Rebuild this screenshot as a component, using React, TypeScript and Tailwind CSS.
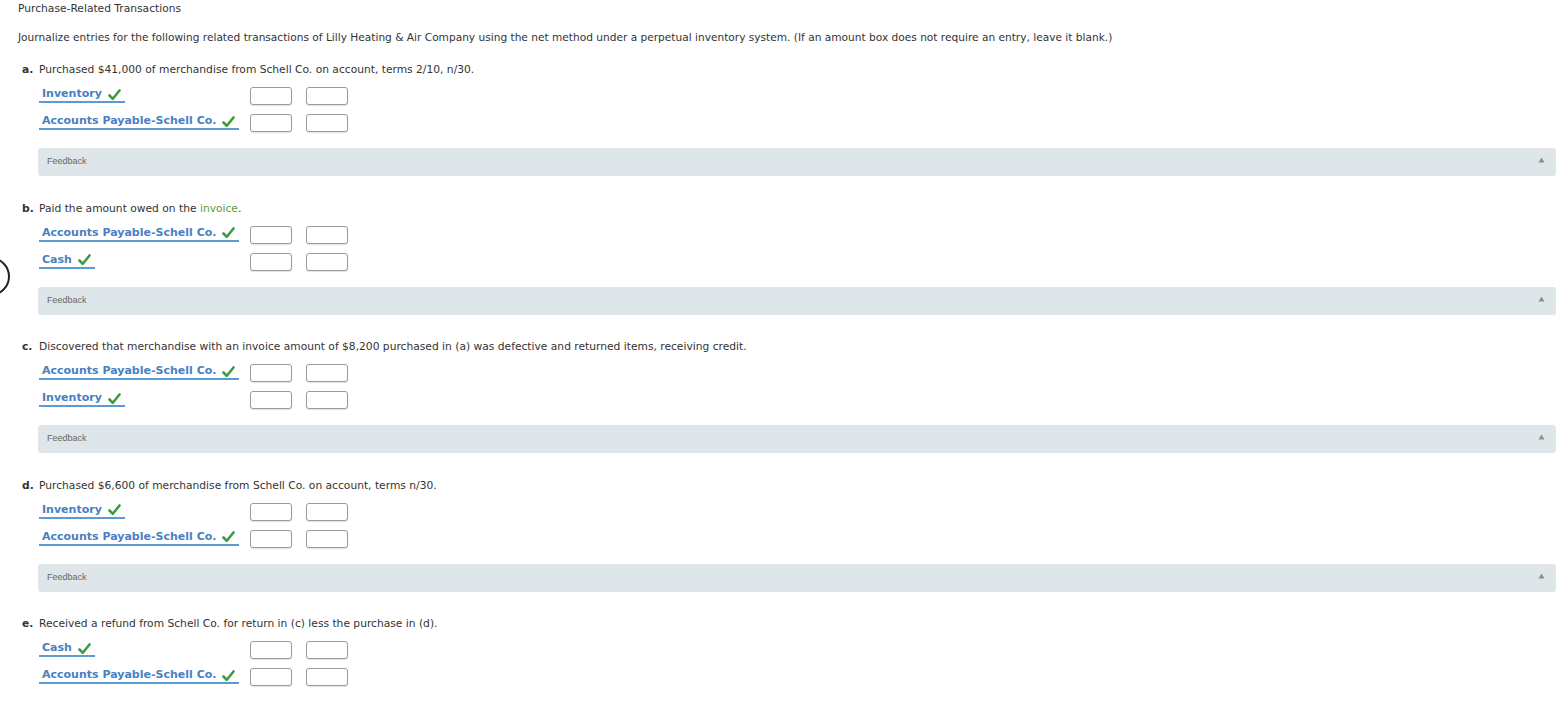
import React from "react";

const font = { fontFamily: '"DejaVu Sans", Verdana, sans-serif' };

function Check() {
  return (
    <svg width="13" height="12" viewBox="0 0 13 12" className="block ml-[6px] mt-[1px]">
      <path d="M1.5 6.5 L4.8 9.8 L11.5 1.5" fill="none" stroke="#3e9b3e" strokeWidth="2.6" strokeLinecap="round" strokeLinejoin="round" />
    </svg>
  );
}

function Row({ label }: { label: string }) {
  return (
    <div className="flex items-start h-[27px]">
      <div className="w-[211px] shrink-0 flex">
        <span className="flex items-center border-b-2 border-[#5b9bd5] pl-[3px] pr-[4px] pt-[1px] text-[11px] leading-[14px] font-bold text-[#4a7fc2]">
          {label}
          <Check />
        </span>
      </div>
      <div className="mt-[1px] w-[42px] h-[18px] rounded-[3px] border border-[#9a9a9a] bg-white shadow-[0_1px_1px_rgba(0,0,0,0.12)]" />
      <div className="ml-[14px] mt-[1px] w-[42px] h-[18px] rounded-[3px] border border-[#9a9a9a] bg-white shadow-[0_1px_1px_rgba(0,0,0,0.12)]" />
    </div>
  );
}

function Feedback() {
  return (
    <div className="mt-[8px] ml-[38px] mr-[2px] h-[28px] rounded-[3px] bg-[#dfe6e9] flex items-center justify-between pl-[9px] pr-[11px]">
      <span className="text-[9px] text-[#666]" style={{ fontFamily: '"Liberation Sans", Arial, sans-serif' }}>Feedback</span>
      <svg width="7" height="6" viewBox="0 0 7 6" className="-mt-[4px]">
        <path d="M3.5 0.5 L6.5 5.5 L0.5 5.5 Z" fill="#8a8f92" />
      </svg>
    </div>
  );
}

function Section({
  letter,
  text,
  rows,
  feedback = true,
}: {
  letter: string;
  text: React.ReactNode;
  rows: string[];
  feedback?: boolean;
}) {
  return (
    <div className="mb-[25.5px]">
      <div className="flex text-[10.7px] leading-[14px] text-[#333] pl-[22px]">
        <span className="w-[17px] font-bold">{letter}</span>
        <span>{text}</span>
      </div>
      <div className="pl-[39px] mt-[9px]">
        {rows.map((r, i) => (
          <Row key={i} label={r} />
        ))}
      </div>
      {feedback && <Feedback />}
    </div>
  );
}

export default function App() {
  const ap = "Accounts Payable-Schell Co.";
  return (
    <div className="relative w-[1558px] h-[701px] bg-white overflow-hidden" style={font}>
      <div className="absolute left-[-29px] top-[257px] w-[39px] h-[39px] rounded-full border-2 border-[#222]" />
      <div className="pl-[18px] pt-[2px] text-[10.7px] leading-[14px] text-[#333]">Purchase-Related Transactions</div>
      <div className="pl-[18px] mt-[14px] text-[10.6px] leading-[14px] text-[#333]">
        Journalize entries for the following related transactions of Lilly Heating &amp; Air Company using the net method under a perpetual inventory system. (If an amount box does not require an entry, leave it blank.)
      </div>
      <div className="mt-[19px]">
        <Section
          letter="a."
          text="Purchased $41,000 of merchandise from Schell Co. on account, terms 2/10, n/30."
          rows={["Inventory", ap]}
        />
        <Section
          letter="b."
          text={
            <>
              Paid the amount owed on the <span className="text-[#5f9a3a]">invoice</span>.
            </>
          }
          rows={[ap, "Cash"]}
        />
        <Section
          letter="c."
          text="Discovered that merchandise with an invoice amount of $8,200 purchased in (a) was defective and returned items, receiving credit."
          rows={[ap, "Inventory"]}
        />
        <Section
          letter="d."
          text="Purchased $6,600 of merchandise from Schell Co. on account, terms n/30."
          rows={["Inventory", ap]}
        />
        <Section
          letter="e."
          text="Received a refund from Schell Co. for return in (c) less the purchase in (d)."
          rows={["Cash", ap]}
          feedback={false}
        />
      </div>
    </div>
  );
}
